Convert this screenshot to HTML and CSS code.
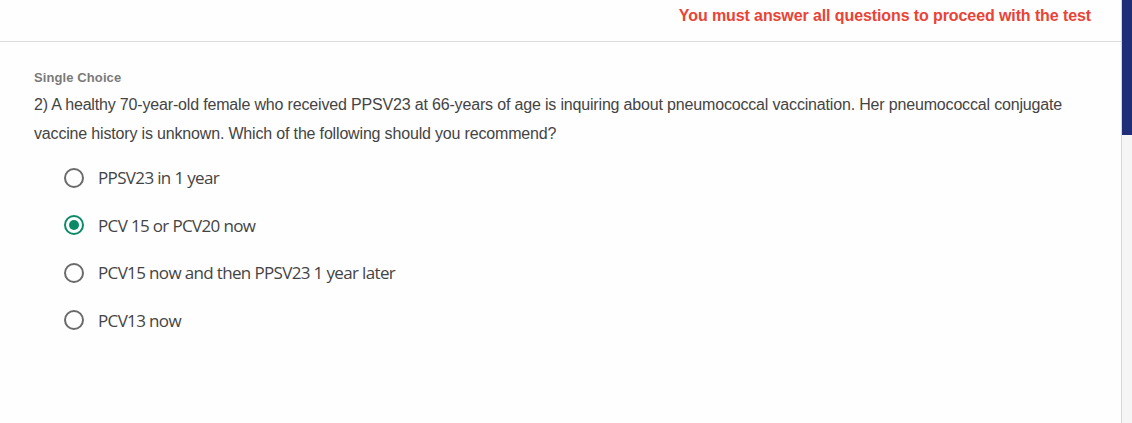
FILE: index.html
```html
<!DOCTYPE html>
<html lang="en">
<head>
  <meta charset="UTF-8" />
  <title>Test – Question 2</title>
  <link rel="stylesheet" href="styles.css">
</head>
<body>

<div class="page">
  <div class="main">
    <div class="test-header">
      <div class="warning">You must answer all questions to proceed with the test</div>
    </div>

    <div class="question">
      <div class="question-type">Single Choice</div>
      <div class="question-text">
        2) A healthy 70-year-old female who received PPSV23 at 66-years of age is inquiring about pneumococcal vaccination. Her pneumococcal conjugate vaccine history is unknown. Which of the following should you recommend?
      </div>

      <div class="options">
        <label class="option">
          <span class="radio"></span>
          <span class="option-text">PPSV23 in 1 year</span>
        </label>
        <label class="option checked">
          <span class="radio"></span>
          <span class="option-text">PCV 15 or PCV20 now</span>
        </label>
        <label class="option">
          <span class="radio"></span>
          <span class="option-text">PCV15 now and then PPSV23 1 year later</span>
        </label>
        <label class="option">
          <span class="radio"></span>
          <span class="option-text">PCV13 now</span>
        </label>
      </div>
    </div>
  </div>

  <div class="scrollbar">
    <div class="scroll-thumb"></div>
  </div>
</div>

</body>
</html>
```

FILE: styles.css
```css
html, body {
  margin: 0;
  padding: 0;
  height: 100%;
}

body {
  font-family: 'Liberation Sans', Arial, sans-serif;
  background: white;
  color: #444;
  overflow: hidden;
}

.page {
  display: flex;
  height: 423px;
}

.main {
  flex: 1;
  background: #fefefe;
}

.test-header {
  height: 41px;
  border-bottom: 1px solid #dcdcdc;
  display: flex;
  justify-content: flex-end;
  align-items: flex-start;
  padding-right: 30px;
}

.warning {
  color: #ea4335;
  font-weight: bold;
  font-size: 16px;
  letter-spacing: -0.1px;
  margin-top: 7px;
}

.question {
  padding: 28px 34px 0 34px;
}

.question-type {
  font-size: 13px;
  font-weight: bold;
  color: #7a7a7a;
  letter-spacing: 0.1px;
  line-height: 16px;
}

.question-text {
  font-size: 16px;
  line-height: 29px;
  letter-spacing: -0.17px;
  color: #444;
  margin-top: 4px;
}

.options {
  display: flex;
  flex-direction: column;
  gap: 26.5px;
  margin-top: 19px;
  padding-left: 30px;
}

.option {
  display: flex;
  align-items: center;
  gap: 14px;
  height: 21px;
  cursor: pointer;
}

.radio {
  width: 16px;
  height: 16px;
  border: 2px solid #6b6b6b;
  border-radius: 50%;
  box-sizing: content-box;
  display: flex;
  align-items: center;
  justify-content: center;
}

.option.checked .radio {
  border-color: #0b8a68;
}

.option.checked .radio::after {
  content: "";
  width: 10px;
  height: 10px;
  border-radius: 50%;
  background: #0b8a68;
}

.option-text {
  font-family: 'Open Sans', sans-serif;
  font-size: 17px;
  letter-spacing: -0.65px;
  color: #444;
}

.scrollbar {
  width: 10px;
  background: #f5f5f5;
  border-left: 1px solid #d6d6d6;
}

.scroll-thumb {
  height: 135px;
  background: #1e2e78;
}
```
